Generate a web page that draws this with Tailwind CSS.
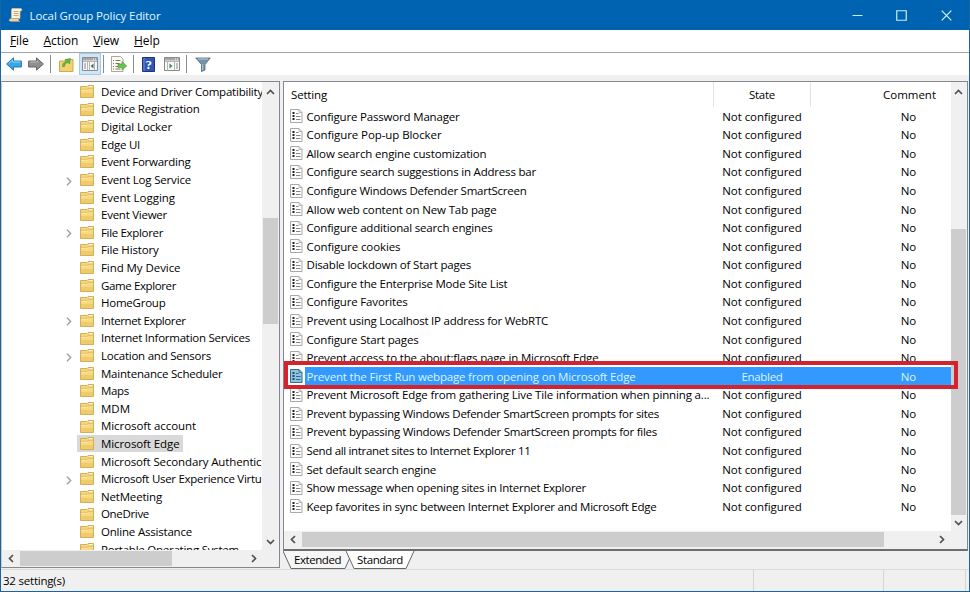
<!DOCTYPE html>
<html lang="en">
<head>
    <meta charset="UTF-8">
    <meta name="viewport" content="width=device-width, initial-scale=1.0">
    <title>Local Group Policy Editor</title>
    <script src="https://cdn.jsdelivr.net/npm/@tailwindcss/browser@4"></script>
</head>
<body class="w-[970px] h-[592px] overflow-hidden font-['Open_Sans','Noto_Sans',sans-serif] text-[11.5px] text-black whitespace-nowrap">
    <div class="w-full h-full flex flex-col bg-[#f0f0f0] border-x border-b border-[#1c64a0]">
        <!-- Title bar -->
        <header class="h-[30px] shrink-0 bg-[#0063b1] text-[#e4f6ff] flex items-center pl-[7px]">
            <svg class="w-4 h-4" viewBox="0 0 16 16">
                <path d="M4 1.500h8.500c1.600 0 1.800 2.500.2 2.500H12v7.500H3.500V3z" fill="#fbf3df" stroke="#d9c29a" stroke-width=".7"/>
                <path d="M3.500 11.500H11c-1 1 0 3 1 3H3c-2.500 0-2.500-3 .5-3z" fill="#e9d3ad" stroke="#b89566" stroke-width=".6"/>
                <path d="M5.500 4.500h5M5.500 6.500h5M5.500 8.500h5" stroke="#c99f72" stroke-width=".9"/>
            </svg>
            <h1 class="pl-[5.500px] grow pt-px"><span data-w="131">Local Group Policy Editor</span></h1>
            <svg class="w-[11px] h-[11px] mr-[33px]" viewBox="0 0 11 11"><path d="M.5 5.500h10" stroke="#c4f1ff"/></svg>
            <svg class="w-[11px] h-[11px] mr-[34px]" viewBox="0 0 11 11"><path d="M.75.75h9.500v9.500H.75z" fill="none" stroke="#c4f1ff" stroke-width="1.200"/></svg>
            <svg class="w-[11px] h-[11px] mr-[17px]" viewBox="0 0 11 11"><path d="M.7.7l9.600 9.600M10.300.7L.7 10.300" stroke="#d4f5ff" stroke-width="1.200"/></svg>
        </header>

        <!-- Menu -->
        <nav class="h-[23px] shrink-0 bg-white border-b border-[#a5a5a5] flex items-center pl-[9px] gap-[15px] text-[12px] tracking-[-0.1px]">
            <span><u>F</u>ile</span>
            <span><u>A</u>ction</span>
            <span><u>V</u>iew</span>
            <span><u>H</u>elp</span>
        </nav>

        <!-- Toolbar -->
        <div class="h-[22px] shrink-0 bg-white flex items-center pl-[5px]">
            <svg class="w-4 h-[14px]" viewBox="0 0 16 14"><path d="M.6 7L7.500.8V4H15.400v6H7.500v3.200z" fill="#38a7e4" stroke="#1c6ea8" stroke-width=".9"/><path d="M2.800 6.500L6.500 3v2h8" stroke="#8bd4f7" fill="none"/></svg>
            <svg class="w-4 h-[14px] ml-[6px]" viewBox="0 0 16 14"><path d="M15.400 7L8.500.8V4H.6v6h7.900v3.200z" fill="#8f8f8f" stroke="#5a5a5a" stroke-width=".9"/><path d="M1.500 5h8V3.500" stroke="#bbb" fill="none"/></svg>
            <i class="w-px h-[18px] bg-[#8c8c8c] ml-[6px]"></i>
            <svg class="w-[15px] h-[15px] ml-[8px]" viewBox="0 0 15 15"><path d="M.5 4h5l1-1.500h7.500v12H.5z" fill="#f3d272" stroke="#c19a3d" stroke-width=".8"/><path d="M3.500 9.500c0-3 1.500-4.500 4-5L6 2.500 11.500 1.500 10.500 7 9 5.500C7 6 5.500 7 5.500 9.500z" fill="#63b845" stroke="#3d8a2b" stroke-width=".5"/></svg>
            <span class="w-[22px] h-[22px] ml-[5px] bg-[#cfe6f8] border border-[#9fcbee] flex items-center justify-center">
                <svg class="w-4 h-[14px]" viewBox="0 0 16 14"><path d="M.5.5h15v13H.5z" fill="#f7f7f7" stroke="#8a8a8a"/><path d="M1 1h14v2.500H1z" fill="#a5a5a5"/><path d="M11 2h1M13 2h1" stroke="#fff"/><path d="M1 4.500h14M5.500 5v8.500M7.500 5v8.500M12.500 5v8.500" stroke="#a5a5a5" stroke-width=".8"/><path d="M2 7h2M2 9h2M2 11h2" stroke="#888"/><path d="M11.500 6.500v5L8.700 9z" fill="#2d6f62"/></svg>
            </span>
            <i class="w-px h-[18px] bg-[#8c8c8c] ml-[2px]"></i>
            <svg class="w-[16px] h-[16px] ml-[7px]" viewBox="0 0 16 16"><path d="M.5.5h9l2.500 2.500v12.500H.5z" fill="#fcfaf0" stroke="#999182" stroke-width=".8"/><path d="M2 4.500h1M4.500 4.500h5M2 7.500h1M4.500 7.500h4M2 10.500h1M4.500 10.500h4M2 13h1M4.500 13h5" stroke="#777"/><path d="M7 8h4V5.500l4.700 4.500-4.700 4V11.500H7z" fill="#6cc14c" stroke="#449630" stroke-width=".6"/></svg>
            <i class="w-px h-[18px] bg-[#8c8c8c] ml-[6px]"></i>
            <svg class="w-[13px] h-[15px] ml-[8px]" viewBox="0 0 13 15"><path d="M.5.5h12v14H.5z" fill="#3157b5" stroke="#1d3577"/><path d="M2 1v13" stroke="#7590d2"/><text x="3.500" y="12" font-size="13" font-weight="bold" font-family="Liberation Serif" fill="#fff">?</text></svg>
            <svg class="w-4 h-[14px] ml-[9px]" viewBox="0 0 16 14"><path d="M.5.5h15v13H.5z" fill="#f7f7f7" stroke="#8a8a8a"/><path d="M1 1h14v2.500H1z" fill="#a5a5a5"/><path d="M11 2h1M13 2h1" stroke="#fff"/><path d="M1 4.500h14M3.500 5v8.500M10.500 5v8.500" stroke="#a5a5a5" stroke-width=".8"/><path d="M12 7h2M12 9h2M12 11h2" stroke="#888"/><path d="M5.500 6.500v5L8.500 9z" fill="#3c8a4c"/></svg>
            <i class="w-px h-[18px] bg-[#8c8c8c] ml-[6px]"></i>
            <svg class="w-4 h-[15px] ml-[8px]" viewBox="0 0 16 15"><path d="M.8 1h14.400L10 7.500v5.500l-3.500 1.500v-7z" fill="#7492ac" stroke="#4d687f" stroke-width=".8"/><path d="M3 2h10" stroke="#bdd0de"/><path d="M7.700 7v6" stroke="#b7cbd9"/></svg>
        </div>

        <main class="flex h-[487px] mt-[6px] shrink-0">
            <!-- Console tree -->
            <aside class="w-[279px] h-full border border-[#828790] border-l-[#c5cbd0] bg-white flex flex-col">
                <div class="flex h-[468px] overflow-hidden">
                    <ul id="tree" class="w-[260px] overflow-hidden pt-[0.7px]"></ul>
                    <div class="w-[17px] h-full bg-[#f0f0f0] flex flex-col items-center pt-[7px] pb-[5px] pr-px">
                        <svg class="w-[9px] h-[6px]" viewBox="0 0 9 6"><path d="M1 5l3.500-3.500L8 5" fill="none" stroke="#505050" stroke-width="1.700"/></svg>
                        <div class="w-[15px] h-[106px] bg-[#cdcdcd] mt-[123px] mb-auto"></div>
                        <svg class="w-[9px] h-[6px]" viewBox="0 0 9 6"><path d="M1 1l3.500 3.500L8 1" fill="none" stroke="#505050" stroke-width="1.700"/></svg>
                    </div>
                </div>
                <div class="h-[17px] bg-[#f0f0f0] flex items-center pl-[6px] pr-[22px]">
                    <svg class="w-[6px] h-[9px]" viewBox="0 0 6 9"><path d="M5 1L1.500 4.500 5 8" fill="none" stroke="#505050" stroke-width="1.700"/></svg>
                    <div class="w-[152px] h-[15px] bg-[#cdcdcd] ml-[6px] mr-auto"></div>
                    <svg class="w-[6px] h-[9px]" viewBox="0 0 6 9"><path d="M1 1l3.500 3.500L1 8" fill="none" stroke="#505050" stroke-width="1.700"/></svg>
                </div>
            </aside>

            <!-- Policy settings -->
            <section class="ml-[3px] w-[685px] h-full flex flex-col">
                <div class="relative h-[470px] border border-[#828790] border-b-2 border-b-[#6d6d6d] bg-white flex flex-col">
                    <div class="flex h-[449px]">
                        <div class="w-[667px] flex flex-col">
                            <div class="flex h-[25px] items-center shrink-0">
                                <span class="w-[429px] pl-[7px]"><span data-w="36">Setting</span></span>
                                <span class="w-[98px] h-full border-x border-[#e2e2e2] flex items-center justify-center"><span data-w="26">State</span></span>
                                <span class="grow text-right pr-[15px]"><span data-w="53">Comment</span></span>
                            </div>
                            <ul id="settings"></ul>
                        </div>
                        <div class="w-[16px] bg-[#f0f0f0] flex flex-col items-center pt-[7px] pb-[5px] pr-px">
                            <svg class="w-[9px] h-[6px]" viewBox="0 0 9 6"><path d="M1 5l3.500-3.500L8 5" fill="none" stroke="#505050" stroke-width="1.700"/></svg>
                            <div class="w-[15px] h-[286px] bg-[#cdcdcd] mt-[134px] mb-auto"></div>
                            <svg class="w-[9px] h-[6px]" viewBox="0 0 9 6"><path d="M1 1l3.500 3.500L8 1" fill="none" stroke="#505050" stroke-width="1.700"/></svg>
                        </div>
                    </div>
                    <div class="h-[18px] bg-[#f0f0f0] flex items-start pl-[6px] pr-[22px]">
                        <svg class="w-[6px] h-[9px] mt-[4px]" viewBox="0 0 6 9"><path d="M5 1L1.500 4.500 5 8" fill="none" stroke="#505050" stroke-width="1.700"/></svg>
                        <div class="w-[582px] h-[15px] mt-px bg-[#cdcdcd] ml-[6px] mr-auto"></div>
                        <svg class="w-[6px] h-[9px] mt-[4px]" viewBox="0 0 6 9"><path d="M1 1l3.500 3.500L1 8" fill="none" stroke="#505050" stroke-width="1.700"/></svg>
                    </div>
                    <!-- Highlight frame -->
                    <div class="absolute left-0 top-[279px] w-[674px] h-[28px] border-4 border-[#d2232f]"></div>
                </div>
                <!-- Tabs -->
                <div class="relative h-[17px]">
                    <svg class="absolute left-0 top-0 w-[134px] h-[18px]" viewBox="0 0 134 18">
                        <path d="M0 0l8 17.500h54L70 0" fill="#f6f6f6" stroke="#666"/>
                        <path d="M63 0l8 17.500h52L131 0" fill="#fff" stroke="#666"/>
                    </svg>
                    <div class="relative flex pl-[11px] h-[17px] items-center">
                        <span class="w-[63px]"><span data-w="47">Extended</span></span>
                        <span data-w="46">Standard</span>
                    </div>
                </div>
            </section>
        </main>

        <!-- Status bar -->
        <footer class="grow border-t border-[#dadada] flex items-center mt-px">
            <span class="w-[752px] pl-[2px]"><span data-w="62">32 setting(s)</span></span>
            <span class="w-[130px] h-full border-l border-[#d5d5d5]"></span>
            <span class="w-[83px] h-full border-x border-[#d5d5d5]"></span>
        </footer>
    </div>

    <script>
        // name, label width, has children
        const tree = [
            ['Device and Driver Compatibility', 162],
            ['Device Registration', 98.5],
            ['Digital Locker', 71],
            ['Edge UI', 39],
            ['Event Forwarding', 89.5],
            ['Event Log Service', 90, true],
            ['Event Logging', 74],
            ['Event Viewer', 66],
            ['File Explorer', 62, true],
            ['File History', 57.5],
            ['Find My Device', 79.5],
            ['Game Explorer', 75],
            ['HomeGroup', 64.5],
            ['Internet Explorer', 84.5, true],
            ['Internet Information Services', 149],
            ['Location and Sensors', 110, true],
            ['Maintenance Scheduler', 121.5],
            ['Maps', 28],
            ['MDM', 29],
            ['Microsoft account', 95],
            ['Microsoft Edge', 78.5],
            ['Microsoft Secondary Authentic', 160.5],
            ['Microsoft User Experience Virtu', 160.5, true],
            ['NetMeeting', 61],
            ['OneDrive', 48],
            ['Online Assistance', 91],
            ['Portable Operating System', 138]
        ];

        const settings = [
            ['Configure Password Manager', 153],
            ['Configure Pop-up Blocker', 135],
            ['Allow search engine customization', 180],
            ['Configure search suggestions in Address bar', 229.5],
            ['Configure Windows Defender SmartScreen', 220],
            ['Allow web content on New Tab page', 190],
            ['Configure additional search engines', 186],
            ['Configure cookies', 94],
            ['Disable lockdown of Start pages', 164.5],
            ['Configure the Enterprise Mode Site List', 201],
            ['Configure Favorites', 101],
            ['Prevent using Localhost IP address for WebRTC', 241.5],
            ['Configure Start pages', 112],
            ['Prevent access to the about:flags page in Microsoft Edge', 292],
            ['Prevent the First Run webpage from opening on Microsoft Edge', 329],
            ['Prevent Microsoft Edge from gathering Live Tile information when pinning a...', 403],
            ['Prevent bypassing Windows Defender SmartScreen prompts for sites', 352.5],
            ['Prevent bypassing Windows Defender SmartScreen prompts for files', 350.5],
            ['Send all intranet sites to Internet Explorer 11', 224],
            ['Set default search engine', 129.5],
            ['Show message when opening sites in Internet Explorer', 279.5],
            ['Keep favorites in sync between Internet Explorer and Microsoft Edge', 350]
        ];

        const folder = `<svg class="w-[14px] h-[13px] shrink-0" viewBox="0 0 14 13">
            <path d="M.5 1.500h6.500l1-1h5.500v12H.5z" fill="#f7d981" stroke="#cda94e" stroke-width=".9"/>
            <path d="M1 8h12v4H1z" fill="#f0cb69"/>
            <path d="M9 1.800h3.500" stroke="#fffbe8" stroke-width="1.300"/><path d="M1 4.300h6.500l1-1.200H13" stroke="#d3ab4e" stroke-width=".8" fill="none"/>
            <path d="M1.300 5.200h6.500" stroke="#fff0b8" stroke-width=".8"/></svg>`;

        document.getElementById('tree').innerHTML = tree.map(([name, width, parent]) => `
            <li class="h-[17.62px] flex items-center pl-[64px]">
                <svg class="w-[6px] h-[9px] mr-[5px] shrink-0 mt-[3px]" viewBox="0 0 6 9">${parent ? '<path d="M1 .8l3.700 3.700L1 8.200" fill="none" stroke="#a0a0a0" stroke-width="1.400"/>' : ''}</svg>
                <span class="flex items-center h-full pl-[3px] pr-[3px] ${name === 'Microsoft Edge' ? 'bg-[#d9d9d9]' : ''}">${folder}<span class="ml-[7px]" data-w="${width}">${name}</span></span>
            </li>`).join('');

        document.getElementById('settings').innerHTML = settings.map(([name, width]) => {
            const sel = name.startsWith('Prevent the First');
            return `
            <li class="h-[18.59px] flex items-center pl-[6px]">
                <svg class="w-[13px] h-[14px] mr-[2px] shrink-0" viewBox="0 0 13 14">
                    <path d="M.5.5h8.500l3 3v10H.5z" fill="${sel ? '#8fc3e0' : '#fdfdfd'}" stroke="${sel ? '#2f6c8c' : '#a9a9a9'}"/>
                    <path d="M9 .5v3h3" fill="none" stroke="${sel ? '#2f6c8c' : '#a9a9a9'}" stroke-width=".8"/>
                    <path d="M2.500 4h2M2.500 7h2M2.500 10h2" stroke="${sel ? '#1a4d68' : '#222'}" stroke-width="2"/>
                    <path d="M6 4.500h2.500M6 7.500h4.500M6 10.500h4.500" stroke="${sel ? '#2f6c8c' : '#888'}"/>
                </svg>
                <span class="h-full grow flex items-center pl-[1.5px] ${sel ? 'bg-[#3399ff] text-[#d9f5ff]' : ''}">
                    <span class="w-[407px] shrink-0"><span data-w="${width}">${name}</span></span>
                    <span class="w-[97px] shrink-0 text-center">${sel ? '<span data-w="41">Enabled</span>' : '<span data-w="79.5">Not configured</span>'}</span>
                    <span class="w-[140px] pl-[56px] text-center">No</span>
                </span>
            </li>`;
        }).join('');

        // fit each label to its width
        const ctx = document.createElement('canvas').getContext('2d');
        ctx.font = '11.5px "Open Sans"';
        document.querySelectorAll('[data-w]').forEach(el => {
            const text = el.textContent;
            el.style.letterSpacing = (el.dataset.w - ctx.measureText(text).width) / text.length + 'px';
        });
    </script>
</body>
</html>
